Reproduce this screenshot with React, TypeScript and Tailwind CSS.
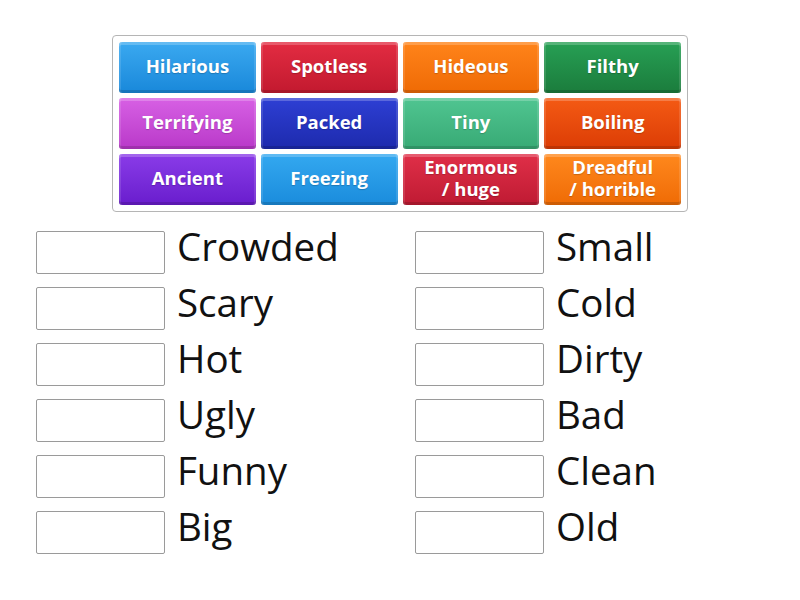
import React from "react";

const tiles: { label: string[]; cls: string }[] = [
  { label: ["Hilarious"], cls: "from-[#3aa9f0] to-[#1888da]" },
  { label: ["Spotless"], cls: "from-[#e32c42] to-[#c2192f]" },
  { label: ["Hideous"], cls: "from-[#ff8419] to-[#ef6a04]" },
  { label: ["Filthy"], cls: "from-[#27a055] to-[#1b7c3c]" },
  { label: ["Terrifying"], cls: "from-[#d760e4] to-[#b938c9]" },
  { label: ["Packed"], cls: "from-[#2e3fd4] to-[#1d2aad]" },
  { label: ["Tiny"], cls: "from-[#50c591] to-[#37aa75]" },
  { label: ["Boiling"], cls: "from-[#f45a14] to-[#dc3c05]" },
  { label: ["Ancient"], cls: "from-[#8a3be8] to-[#691ccd]" },
  { label: ["Freezing"], cls: "from-[#33a8f0] to-[#1a8cdc]" },
  { label: ["Enormous", "/ huge"], cls: "from-[#e02f48] to-[#bf1a33]" },
  { label: ["Dreadful", "/ horrible"], cls: "from-[#ff881c] to-[#ef6b04]" },
];

const left = ["Crowded", "Scary", "Hot", "Ugly", "Funny", "Big"];
const right = ["Small", "Cold", "Dirty", "Bad", "Clean", "Old"];

function Row({ word }: { word: string }) {
  return (
    <div className="flex items-center h-[43px] mb-[13px]">
      <div className="w-[129px] h-[43px] border border-[#9a9a9a] rounded-[2px] bg-white shrink-0" />
      <span className="ml-[12px] text-[38.5px] leading-none text-[#111] -mt-[12px]">{word}</span>
    </div>
  );
}

export default function App() {
  return (
    <div
      className="w-[800px] h-[600px] bg-white overflow-hidden"
      style={{ fontFamily: '"Open Sans", "Liberation Sans", sans-serif' }}
    >
      <div className="pt-[35px] flex justify-center">
        <div className="w-[576px] border border-[#b5b5b5] rounded-[4px] p-[6px]">
          <div className="grid grid-cols-4 gap-x-[5px] gap-y-[5px]">
            {tiles.map((t, i) => (
              <div
                key={i}
                className={`h-[51px] rounded-[3px] bg-linear-to-b ${t.cls} shadow-[inset_0_3px_0_rgba(255,255,255,0.22),inset_0_-3px_0_rgba(0,0,0,0.14),inset_2px_0_0_rgba(255,255,255,0.12),inset_-2px_0_0_rgba(255,255,255,0.12)] flex flex-col items-center justify-center text-white font-bold text-[18.5px] leading-[22px] pb-[3px] [text-shadow:0_1px_1px_rgba(0,0,0,0.2)]`}
              >
                {t.label.map((l, j) => (
                  <span key={j}>{l}</span>
                ))}
              </div>
            ))}
          </div>
        </div>
      </div>
      <div className="mt-[19px] pl-[36px] grid grid-cols-[379px_379px]">
        <div>
          {left.map((w) => (
            <Row key={w} word={w} />
          ))}
        </div>
        <div>
          {right.map((w) => (
            <Row key={w} word={w} />
          ))}
        </div>
      </div>
    </div>
  );
}
